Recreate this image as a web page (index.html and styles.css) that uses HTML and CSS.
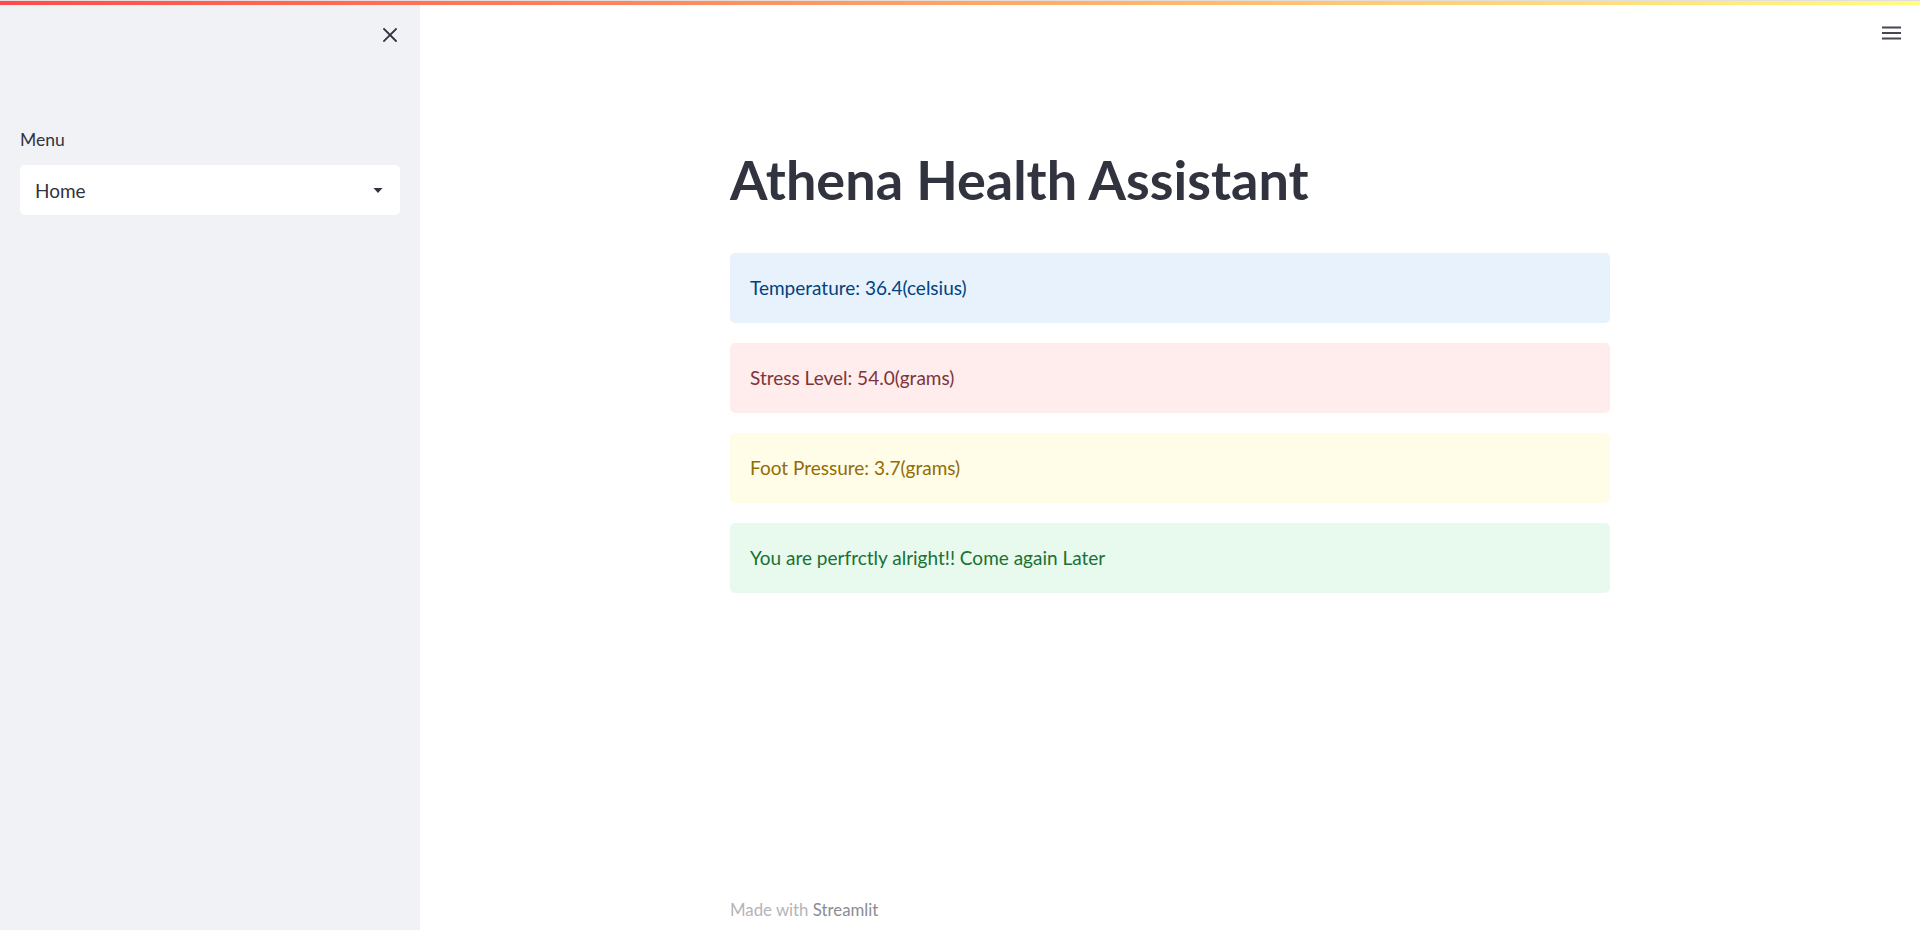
FILE: index.html
```html
<!DOCTYPE html>
<html lang="en">
<head>
    <meta charset="UTF-8">
    <meta name="viewport" content="width=device-width, initial-scale=1.0">
    <title>Athena Health Assistant</title>
    <link rel="stylesheet" href="styles.css">
</head>
<body>
    <div class="decoration"></div>

    <div class="app">
        <aside class="sidebar">
            <div class="sidebar-top">
                <button class="icon-btn" aria-label="Close sidebar">
                    <svg width="14" height="14" viewBox="0 0 14 14" fill="none" xmlns="http://www.w3.org/2000/svg"><path d="M1 1L13 13M13 1L1 13" stroke="#31333F" stroke-width="1.8" stroke-linecap="square"/></svg>
                </button>
            </div>

            <div class="field">
                <label class="field-label">Menu</label>
                <div class="select">
                    <span>Home</span>
                    <svg class="caret" width="10" height="5" viewBox="0 0 10 5" xmlns="http://www.w3.org/2000/svg"><polygon points="0.5,0 9.5,0 5,5" fill="#31333F"/></svg>
                </div>
            </div>
        </aside>

        <main class="main">
            <div class="main-top">
                <button class="icon-btn" aria-label="Main menu">
                    <svg width="19" height="14" viewBox="0 0 19 14" xmlns="http://www.w3.org/2000/svg"><rect x="0" y="0.5" width="19" height="2" fill="#454752"/><rect x="0" y="6" width="19" height="2" fill="#454752"/><rect x="0" y="11.5" width="19" height="2" fill="#454752"/></svg>
                </button>
            </div>

            <div class="block">
                <h1>Athena Health Assistant</h1>
                <div class="alerts">
                    <div class="alert alert-info">Temperature: 36.4(celsius)</div>
                    <div class="alert alert-error">Stress Level: 54.0(grams)</div>
                    <div class="alert alert-warning">Foot Pressure: 3.7(grams)</div>
                    <div class="alert alert-success">You are perfrctly alright!! Come again Later</div>
                </div>
            </div>

            <footer class="footer">
                Made with <a href="#">Streamlit</a>
            </footer>
        </main>
    </div>
</body>
</html>
```

FILE: styles.css
```css
:root {
    --text: #31333F;
    --sidebar-bg: #f0f2f6;
    --font: Lato, "Noto Sans", sans-serif;
}
* { box-sizing: border-box; }
html, body { height: 100%; }
body {
    margin: 0; font-family: var(--font); color: var(--text); background: #fff;
    display: flex; flex-direction: column; overflow: hidden;
}
.decoration {
    height: 5px; flex-shrink: 0;
    border-top: 1.5px solid #e6dede;
    background: linear-gradient(90deg, rgb(255, 75, 75), rgb(255, 253, 128));
}
.app { flex: 1; display: flex; min-height: 0; }

.sidebar { width: 420px; flex-shrink: 0; background: var(--sidebar-bg); padding: 0 20px; }
.sidebar-top { display: flex; justify-content: flex-end; padding: 16px 0 0; margin-right: -4px; }
.icon-btn {
    width: 28px; height: 28px; padding: 0; border: none; background: none;
    display: flex; align-items: center; justify-content: center; cursor: pointer;
}
.field { margin-top: 78px; }
.field-label { display: block; font-size: 17.5px; line-height: 25px; margin-bottom: 13px; }
.select {
    height: 50px; background: #fff; border-radius: 5px;
    display: flex; align-items: center; justify-content: space-between;
    padding: 0 17px 0 15px; font-size: 19px;
}
.caret { display: block; }

.main { flex: 1; display: flex; flex-direction: column; min-width: 0; }
.main-top { display: flex; justify-content: flex-end; padding: 14px 15px 0 0; }
.block { width: 880px; margin: 0 auto; padding-top: 101px; }
h1 {
    margin: 0 0 41px; font-size: 54px; line-height: 64px; font-weight: 700;
    color: var(--text);
}
.alerts { display: flex; flex-direction: column; gap: 20px; }
.alert { padding: 20px; border-radius: 5px; font-size: 19px; line-height: 30px; }
.alert-info { background: #e8f2fc; color: #004280; }
.alert-error { background: #ffecec; color: #7d353b; }
.alert-warning { background: #fffce7; color: #926c05; }
.alert-success { background: #e8f9ee; color: #177233; }

.footer {
    width: 880px; margin: auto auto 0; padding-bottom: 8px;
    font-size: 16.8px; line-height: 25px; color: #b3b4b9;
}
.footer a { color: #8a8c94; text-decoration: none; }
```
